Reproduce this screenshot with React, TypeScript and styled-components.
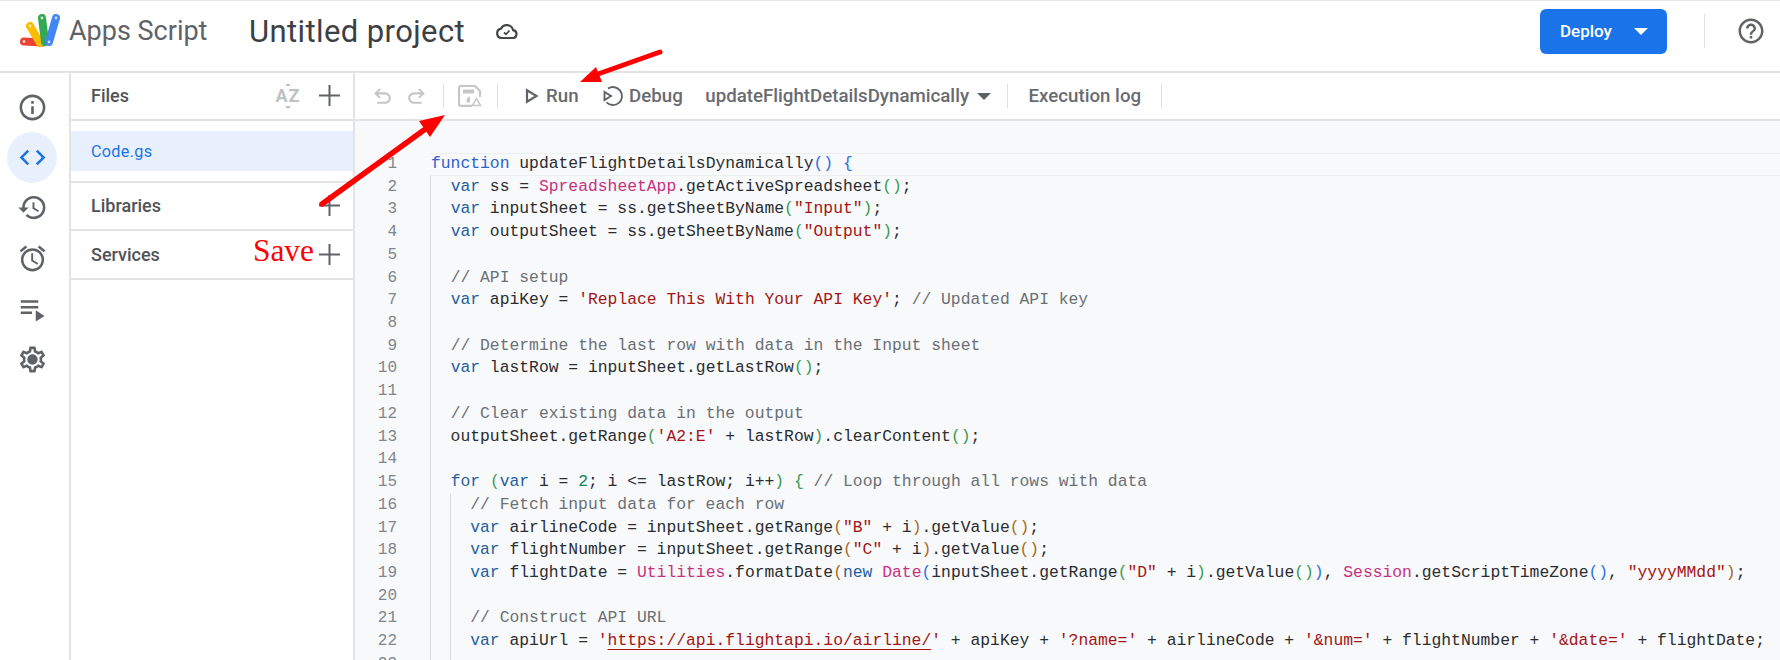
import React from "react";
import styled, { createGlobalStyle } from "styled-components";

const Global = createGlobalStyle`
  html, body { margin: 0; padding: 0; background: #fff; overflow: hidden; }
  #root { width: 1780px; height: 660px; }
  * { box-sizing: border-box; }
`;

const Page = styled.div`
  position: relative;
  width: 1780px;
  height: 660px;
  display: flex;
  flex-direction: column;
  overflow: hidden;
  font-family: Roboto, "Noto Sans", sans-serif;
  color: #444746;
  border-top: 1px solid #e6e6e6;
`;

const Header = styled.header`
  flex: 0 0 72px;
  display: flex;
  align-items: center;
  padding: 0 14px 10px 20px;
  border-bottom: 2px solid #e3e3e3;
`;

const Brand = styled.div`
  display: flex;
  align-items: center;
  gap: 7px;
  width: 229px;
  font-size: 27px;
  color: #5f6368;
`;

const Title = styled.h1`
  margin: 0;
  font-size: 31px;
  font-weight: 400;
  color: #3c4043;
  letter-spacing: 0.4px;
`;

const CloudBox = styled.div`
  display: flex;
  margin-left: 30px;
  color: #444746;
`;

const Spacer = styled.div`
  flex: 1;
`;

const DeployButton = styled.button`
  width: 127px;
  height: 45px;
  border: 0;
  border-radius: 6px;
  background: #1a73e8;
  color: #fff;
  font: 500 17px Roboto, sans-serif;
  display: flex;
  align-items: center;
  padding: 0 19px 0 20px;
  justify-content: space-between;
`;

const CaretWhite = styled.span`
  width: 0;
  height: 0;
  border-left: 7px solid transparent;
  border-right: 7px solid transparent;
  border-top: 7px solid #fff;
`;

const HeaderRule = styled.div`
  width: 1px;
  height: 34px;
  background: #e0e0e0;
  margin: 0 31px 0 37px;
`;

const HelpBox = styled.div`
  display: flex;
  color: #5f6368;
`;

const Body = styled.div`
  flex: 1;
  display: flex;
  min-height: 0;
`;

const Rail = styled.nav`
  flex: 0 0 71px;
  display: flex;
  flex-direction: column;
  align-items: flex-start;
  padding: 9px 0 0 7px;
  border-right: 2px solid #e3e3e3;
`;

const RailItem = styled.div<{ $active?: boolean }>`
  width: 50px;
  height: 50.4px;
  display: flex;
  align-items: center;
  justify-content: center;
  border-radius: 50%;
  background: ${(p) => (p.$active ? "#e8f0fe" : "transparent")};
  color: ${(p) => (p.$active ? "#1a73e8" : "#5f6368")};
`;

const Panel = styled.aside`
  flex: 0 0 284px;
  display: flex;
  flex-direction: column;
  border-right: 2px solid #e3e3e3;
`;

const PanelRow = styled.div<{ $h: number }>`
  height: ${(p) => p.$h}px;
  display: flex;
  align-items: center;
  padding: 0 13px 1px 20px;
  border-bottom: 2px solid #e3e3e3;
  font-size: 18px;
  font-weight: 500;
  color: #505356;
`;

const RowLabel = styled.span`
  flex: 1;
`;

const FileList = styled.div`
  padding: 10px 0;
  border-bottom: 2px solid #e3e3e3;
`;

const FileItem = styled.div`
  height: 40px;
  display: flex;
  align-items: center;
  padding-left: 20px;
  background: #e8f0fe;
  color: #1a73e8;
  font-size: 16.2px;
  letter-spacing: 0.3px;
`;

const SaveLabel = styled.span`
  font-family: "Liberation Serif", serif;
  font-size: 31.4px;
  font-weight: 400;
  color: #f00;
  margin-right: 5px;
  position: relative;
  top: -3px;
`;

const SortIcon = styled.div`
  position: relative;
  width: 26px;
  height: 26px;
  margin-right: 18px;
  display: flex;
  align-items: center;
  justify-content: center;
  font-size: 18px;
  font-weight: 700;
  color: #bdc1c6;
  letter-spacing: 1px;
`;

const SortSvg = styled.svg`
  position: absolute;
  left: 0;
  top: 0;
`;

const Main = styled.main`
  flex: 1;
  min-width: 0;
  display: flex;
  flex-direction: column;
`;

const Toolbar = styled.div`
  flex: 0 0 48px;
  display: flex;
  align-items: center;
  padding-left: 14.5px;
  border-bottom: 2px solid #e3e3e3;
  font-size: 18.7px;
  font-weight: 500;
  color: #686c70;
`;

const ToolIcon = styled.span<{ $ml?: number; $muted?: boolean }>`
  display: flex;
  margin-left: ${(p) => p.$ml ?? 0}px;
  color: ${(p) => (p.$muted ? "#c4c7c5" : "#5f6368")};
`;

const ToolRule = styled.span<{ $ml: number }>`
  width: 1px;
  height: 24px;
  background: #e0e0e0;
  margin-left: ${(p) => p.$ml}px;
`;

const ToolText = styled.span<{ $ml: number }>`
  margin-left: ${(p) => p.$ml}px;
  white-space: nowrap;
`;

const CaretDark = styled.span`
  width: 0;
  height: 0;
  margin-left: 7.5px;
  border-left: 7px solid transparent;
  border-right: 7px solid transparent;
  border-top: 7px solid #5f6368;
`;

const Editor = styled.div`
  flex: 1;
  min-height: 0;
  background: #f8f9fa;
  padding-top: 32px;
  overflow: hidden;
`;

const CodeLine = styled.div`
  display: flex;
  height: 22.72px;
  line-height: 22.72px;
  font-family: "Liberation Mono", monospace;
  font-size: 16.35px;
  white-space: pre;
`;

const LineNo = styled.span`
  flex: 0 0 42px;
  text-align: right;
  color: #80868b;
  font-size: 16px;
`;

const CodeBody = styled.span<{ $current?: boolean; $guides: number }>`
  flex: 1;
  margin-left: 33px;
  padding-left: 1px;
  color: #2b2d30;
  border-top: ${(p) => (p.$current ? "1px solid #eceef0" : "0")};
  border-bottom: ${(p) => (p.$current ? "1px solid #eceef0" : "0")};
  line-height: ${(p) => (p.$current ? "20.7px" : "22.72px")};
  background-image: ${(p) =>
    p.$guides >= 2
      ? "linear-gradient(#d8dadd,#d8dadd),linear-gradient(#d8dadd,#d8dadd)"
      : p.$guides === 1
        ? "linear-gradient(#d8dadd,#d8dadd)"
        : "none"};
  background-size: 1px 100%;
  background-repeat: no-repeat;
  background-position: 0 0, 19.6px 0;
`;

const Tok = styled.span<{ $c: string; $u?: boolean }>`
  color: ${(p) => p.$c};
  text-decoration: ${(p) => (p.$u ? "underline" : "none")};
  text-underline-offset: 4px;
`;

const ArrowLayer = styled.svg`
  position: absolute;
  left: 0;
  top: 0;
  pointer-events: none;
`;

const C = {
  kw: "#1f5f9e",
  fn: "#2f5fd0",
  cls: "#c7317f",
  str: "#a31515",
  com: "#6b7075",
  num: "#098658",
  b1: "#2f6fe8",
  b2: "#3d9a52",
  b3: "#a86a24",
  url: "#a31515",
};

type T = string | [string, keyof typeof C | "u"];

const k = (s: string): T => [s, "kw"];
const s = (t: string): T => [t, "str"];
const cl = (t: string): T => [t, "cls"];
const cm = (t: string): T => [t, "com"];
const b1 = (t: string): T => [t, "b1"];
const b2 = (t: string): T => [t, "b2"];
const b3 = (t: string): T => [t, "b3"];

const LINES: { g: number; t: T[] }[] = [
  { g: 0, t: [["function", "fn"], " updateFlightDetailsDynamically", b1("()"), " ", b1("{")] },
  { g: 1, t: ["  ", k("var"), " ss = ", cl("SpreadsheetApp"), ".getActiveSpreadsheet", b2("()"), ";"] },
  { g: 1, t: ["  ", k("var"), " inputSheet = ss.getSheetByName", b2("("), s('"Input"'), b2(")"), ";"] },
  { g: 1, t: ["  ", k("var"), " outputSheet = ss.getSheetByName", b2("("), s('"Output"'), b2(")"), ";"] },
  { g: 1, t: [""] },
  { g: 1, t: ["  ", cm("// API setup")] },
  { g: 1, t: ["  ", k("var"), " apiKey = ", s("'Replace This With Your API Key'"), "; ", cm("// Updated API key")] },
  { g: 1, t: [""] },
  { g: 1, t: ["  ", cm("// Determine the last row with data in the Input sheet")] },
  { g: 1, t: ["  ", k("var"), " lastRow = inputSheet.getLastRow", b2("()"), ";"] },
  { g: 1, t: [""] },
  { g: 1, t: ["  ", cm("// Clear existing data in the output")] },
  { g: 1, t: ["  outputSheet.getRange", b2("("), s("'A2:E'"), " + lastRow", b2(")"), ".clearContent", b2("()"), ";"] },
  { g: 1, t: [""] },
  { g: 1, t: ["  ", k("for"), " ", b2("("), k("var"), " i = ", ["2", "num"], "; i <= lastRow; i++", b2(")"), " ", b2("{"), " ", cm("// Loop through all rows with data")] },
  { g: 2, t: ["    ", cm("// Fetch input data for each row")] },
  { g: 2, t: ["    ", k("var"), " airlineCode = inputSheet.getRange", b3("("), s('"B"'), " + i", b3(")"), ".getValue", b3("()"), ";"] },
  { g: 2, t: ["    ", k("var"), " flightNumber = inputSheet.getRange", b3("("), s('"C"'), " + i", b3(")"), ".getValue", b3("()"), ";"] },
  {
    g: 2,
    t: ["    ", k("var"), " flightDate = ", cl("Utilities"), ".formatDate", b3("("), k("new"), " ", cl("Date"), b1("("), "inputSheet.getRange", b2("("), s('"D"'), " + i", b2(")"), ".getValue", b2("()"), b1(")"), ", ", cl("Session"), ".getScriptTimeZone", b1("()"), ", ", s('"yyyyMMdd"'), b3(")"), ";"],
  },
  { g: 2, t: [""] },
  { g: 2, t: ["    ", cm("// Construct API URL")] },
  {
    g: 2,
    t: ["    ", k("var"), " apiUrl = ", s("'"), ["https://api.flightapi.io/airline/", "u"], s("'"), " + apiKey + ", s("'?name='"), " + airlineCode + ", s("'&num='"), " + flightNumber + ", s("'&date='"), " + flightDate;"],
  },
  { g: 2, t: [""] },
];

const Icon = ({ d, size = 31, flip }: { d: string; size?: number; flip?: boolean }) => (
  <svg width={size} height={size} viewBox="0 0 24 24" fill="currentColor" style={flip ? { transform: "scaleX(-1)" } : undefined}>
    <path d={d} />
  </svg>
);

const P = {
  info: "M11 7h2v2h-2zm0 4h2v6h-2zm1-9C6.48 2 2 6.48 2 12s4.48 10 10 10 10-4.48 10-10S17.52 2 12 2zm0 18c-4.41 0-8-3.59-8-8s3.59-8 8-8 8 3.59 8 8-3.59 8-8 8z",
  code: "M9.4 16.6 4.8 12l4.6-4.6L8 6l-6 6 6 6 1.4-1.4zm5.2 0 4.6-4.6-4.6-4.6L16 6l6 6-6 6-1.4-1.4z",
  history: "M13 3a9 9 0 0 0-9 9H1l3.89 3.89.07.14L9 12H6c0-3.87 3.13-7 7-7s7 3.13 7 7-3.13 7-7 7c-1.93 0-3.68-.79-4.94-2.06l-1.42 1.42A8.954 8.954 0 0 0 13 21a9 9 0 0 0 0-18zm-1 5v5l4.28 2.54.72-1.21-3.5-2.08V8H12z",
  alarm: "M22 5.72l-4.6-3.86-1.29 1.53 4.6 3.86L22 5.72zM7.88 3.39L6.6 1.86 2 5.71l1.29 1.53 4.59-3.85zM12.5 8H11v6l4.75 2.85.75-1.23-4-2.37V8zM12 4c-4.97 0-9 4.03-9 9s4.03 9 9 9 9-4.03 9-9-4.03-9-9-9zm0 16c-3.87 0-7-3.13-7-7s3.13-7 7-7 7 3.13 7 7-3.13 7-7 7z",
  log: "M3 5h14v2H3zM3 9.5h14v2H3zM3 14h9v2H3zM15 13l7 4.5-7 4.5z",
  gear: "M19.43 12.98c.04-.32.07-.64.07-.98s-.03-.66-.07-.98l2.11-1.65c.19-.15.24-.42.12-.64l-2-3.46c-.12-.22-.39-.3-.61-.22l-2.49 1c-.52-.4-1.08-.73-1.69-.98l-.38-2.65A.488.488 0 0 0 14 2h-4c-.25 0-.46.18-.49.42l-.38 2.65c-.61.25-1.17.59-1.69.98l-2.49-1c-.23-.09-.49 0-.61.22l-2 3.46c-.13.22-.07.49.12.64l2.11 1.65c-.04.32-.07.65-.07.98s.03.66.07.98l-2.11 1.65c-.19.15-.24.42-.12.64l2 3.46c.12.22.39.3.61.22l2.49-1c.52.4 1.08.73 1.69.98l.38 2.65c.03.24.24.42.49.42h4c.25 0 .46-.18.49-.42l.38-2.65c.61-.25 1.17-.59 1.69-.98l2.49 1c.23.09.49 0 .61-.22l2-3.46c.12-.22.07-.49-.12-.64l-2.11-1.65zm-1.98-1.71c.04.31.05.52.05.73 0 .21-.02.43-.05.73l-.14 1.13.89.7 1.08.84-.7 1.21-1.27-.51-1.04-.42-.9.68c-.43.32-.84.56-1.25.73l-1.06.43-.16 1.13-.2 1.35h-1.4l-.19-1.35-.16-1.13-1.06-.43c-.43-.18-.83-.41-1.23-.71l-.91-.7-1.06.43-1.27.51-.7-1.21 1.08-.84.89-.7-.14-1.13c-.03-.31-.05-.54-.05-.74s.02-.43.05-.73l.14-1.13-.89-.7-1.08-.84.7-1.21 1.27.51 1.04.42.9-.68c.43-.32.84-.56 1.25-.73l1.06-.43.16-1.13.2-1.35h1.39l.19 1.35.16 1.13 1.06.43c.43.18.83.41 1.23.71l.91.7 1.06-.43 1.27-.51.7 1.21-1.07.85-.89.7.14 1.13zM12 8c-2.21 0-4 1.79-4 4s1.79 4 4 4 4-1.79 4-4-1.79-4-4-4z",
  help: "M11 18h2v-2h-2v2zm1-16C6.48 2 2 6.48 2 12s4.48 10 10 10 10-4.48 10-10S17.52 2 12 2zm0 18c-4.41 0-8-3.59-8-8s3.59-8 8-8 8 3.59 8 8-3.59 8-8 8zm0-14c-2.21 0-4 1.79-4 4h2c0-1.1.9-2 2-2s2 .9 2 2c0 2-3 1.75-3 5h2c0-2.25 3-2.5 3-5 0-2.21-1.79-4-4-4z",
  undo: "M7 19v-2h7.1c1.05 0 1.96-.33 2.73-1 .78-.67 1.17-1.5 1.17-2.5s-.39-1.83-1.17-2.5c-.77-.67-1.68-1-2.73-1H7.8l2.6 2.6L9 14 4 9l5-5 1.4 1.4L7.8 8h6.3c1.62 0 3 .53 4.15 1.58C19.42 10.63 20 11.93 20 13.5s-.58 2.87-1.75 3.92C17.1 18.47 15.72 19 14.1 19H7z",
};

const Plus = () => (
  <svg width="21" height="21" viewBox="0 0 21 21" fill="#5f6368">
    <path d="M9.5 0h2v9.5H21v2h-9.5V21h-2v-9.5H0v-2h9.5z" />
  </svg>
);

const Logo = () => (
  <svg width="42" height="34" viewBox="0 0 42 34">
    <g fill="none" strokeLinecap="round" strokeWidth="8">
      <path d="M4 27.5 23 28.5" stroke="#ea4335" />
      <path d="M10 12 20 29" stroke="#fbbc04" />
      <path d="M22 4 25 28" stroke="#34a853" />
      <path d="M36 4 29 28" stroke="#4285f4" />
    </g>
    <g fill="#fff" opacity=".75">
      <circle cx="4" cy="27.5" r="1.4" />
      <circle cx="10" cy="12" r="1.4" />
      <circle cx="22" cy="4" r="1.4" />
      <circle cx="36" cy="4" r="1.4" />
      <circle cx="29" cy="28" r="1.4" />
    </g>
  </svg>
);

const CloudCheck = () => (
  <svg width="24" height="24" viewBox="0 0 24 24" fill="none" stroke="currentColor" strokeWidth="2.2">
    <path d="M6.5 19h11a4 4 0 0 0 .6-7.95A6.5 6.5 0 0 0 6 9.7 4.7 4.7 0 0 0 6.5 19z" />
    <path d="m9 13.5 2 1.8 3.5-3.8" strokeWidth="1.8" />
  </svg>
);

const SaveIcon = () => (
  <svg width="24" height="22" viewBox="0 0 24 22" fill="none" stroke="currentColor" strokeWidth="2.2">
    <path d="M14 20.9H3a2 2 0 0 1-2-2V3a2 2 0 0 1 2-2h14l5 5v6" />
    <path d="M5 4.5h11v4H5z" fill="currentColor" stroke="none" />
    <path d="M12 11.5a4 4 0 0 0-3 6h3v-3z" fill="currentColor" stroke="none" />
    <path d="m18.5 13.5 4 7h-8z" strokeWidth="1.5" />
  </svg>
);

const RunIcon = () => (
  <svg width="14" height="16" viewBox="0 0 14 16" fill="none" stroke="currentColor" strokeWidth="2.2">
    <path d="M2 2.2v11.6L11.5 8z" />
  </svg>
);

const DebugIcon = () => (
  <svg width="22" height="22" viewBox="0 0 22 22" fill="none" stroke="currentColor" strokeWidth="1.9">
    <path d="M6 3.6A9 9 0 1 1 4.6 17.4" />
    <path d="M2.5 7v8l6.5-4z" />
  </svg>
);

export default function App() {
  return (
    <Page>
      <Global />
      <Header>
        <Brand>
          <Logo />
          Apps Script
        </Brand>
        <Title>Untitled project</Title>
        <CloudBox>
          <CloudCheck />
        </CloudBox>
        <Spacer />
        <DeployButton>
          Deploy
          <CaretWhite />
        </DeployButton>
        <HeaderRule />
        <HelpBox>
          <Icon d={P.help} size={30} />
        </HelpBox>
      </Header>
      <Body>
        <Rail>
          <RailItem><Icon d={P.info} /></RailItem>
          <RailItem $active><Icon d={P.code} /></RailItem>
          <RailItem><Icon d={P.history} /></RailItem>
          <RailItem><Icon d={P.alarm} /></RailItem>
          <RailItem><Icon d={P.log} size={30} /></RailItem>
          <RailItem><Icon d={P.gear} /></RailItem>
        </Rail>
        <Panel>
          <PanelRow $h={48}>
            <RowLabel>Files</RowLabel>
            <SortIcon>
              AZ
              <SortSvg width="26" height="26" viewBox="0 0 26 26" fill="#bdc1c6">
                <path d="m10 3 3-3 3 3zM10 23l3 3 3-3z" />
              </SortSvg>
            </SortIcon>
            <Plus />
          </PanelRow>
          <FileList>
            <FileItem>Code.gs</FileItem>
          </FileList>
          <PanelRow $h={48}>
            <RowLabel>Libraries</RowLabel>
            <Plus />
          </PanelRow>
          <PanelRow $h={49}>
            <RowLabel>Services</RowLabel>
            <SaveLabel>Save</SaveLabel>
            <Plus />
          </PanelRow>
        </Panel>
        <Main>
          <Toolbar>
            <ToolIcon $muted><Icon d={P.undo} size={25} /></ToolIcon>
            <ToolIcon $muted $ml={9}><Icon d={P.undo} size={25} flip /></ToolIcon>
            <ToolRule $ml={14.5} />
            <ToolIcon $muted $ml={14}><SaveIcon /></ToolIcon>
            <ToolRule $ml={15} />
            <ToolIcon $ml={27}><RunIcon /></ToolIcon>
            <ToolText $ml={7}>Run</ToolText>
            <ToolIcon $ml={23}><DebugIcon /></ToolIcon>
            <ToolText $ml={5.5}>Debug</ToolText>
            <ToolText $ml={22.5}>updateFlightDetailsDynamically</ToolText>
            <CaretDark />
            <ToolRule $ml={16} />
            <ToolText $ml={21}>Execution log</ToolText>
            <ToolRule $ml={20} />
          </Toolbar>
          <Editor>
            {LINES.map((line, i) => (
              <CodeLine key={i}>
                <LineNo>{i + 1}</LineNo>
                <CodeBody $current={i === 0} $guides={line.g}>
                  {line.t.map((t, j) =>
                    typeof t === "string" ? (
                      t
                    ) : t[1] === "u" ? (
                      <Tok key={j} $c={C.url} $u>{t[0]}</Tok>
                    ) : (
                      <Tok key={j} $c={C[t[1]]}>{t[0]}</Tok>
                    ),
                  )}
                </CodeBody>
              </CodeLine>
            ))}
          </Editor>
        </Main>
      </Body>
      <ArrowLayer width="1780" height="660" viewBox="0 0 1780 660">
        <g fill="#f00" stroke="none">
          <path d="M660 51 598 73" stroke="#f00" strokeWidth="5" strokeLinecap="round" fill="none" />
          <path d="M580 81 596 66 602 81z" />
          <path d="M322 203 424 129" stroke="#f00" strokeWidth="5.5" strokeLinecap="round" fill="none" />
          <path d="M445 114 419 120 430 136z" />
        </g>
      </ArrowLayer>
    </Page>
  );
}
